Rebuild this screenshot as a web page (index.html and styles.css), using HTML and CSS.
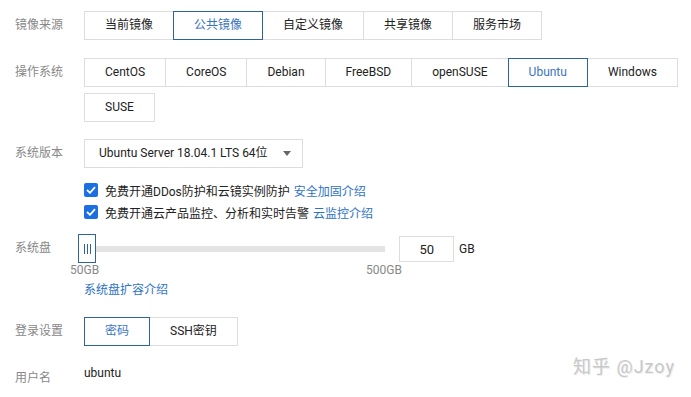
FILE: index.html
```html
<!DOCTYPE html>
<html lang="zh-CN">
<head>
  <meta charset="UTF-8">
  <title>镜像配置</title>
  <link rel="stylesheet" href="styles.css">
</head>
<body>

  <div class="form">

    <!-- 镜像来源 -->
    <div class="row row-first">
      <div class="label">镜像来源</div>
      <div class="options">
        <div class="opt">当前镜像</div>
        <div class="opt active">公共镜像</div>
        <div class="opt">自定义镜像</div>
        <div class="opt">共享镜像</div>
        <div class="opt">服务市场</div>
      </div>
    </div>

    <!-- 操作系统 -->
    <div class="row row-os">
      <div class="label">操作系统</div>
      <div class="options os">
        <div class="opt">CentOS</div>
        <div class="opt">CoreOS</div>
        <div class="opt">Debian</div>
        <div class="opt">FreeBSD</div>
        <div class="opt">openSUSE</div>
        <div class="opt active">Ubuntu</div>
        <div class="opt">Windows</div>
        <div class="opt">SUSE</div>
      </div>
    </div>

    <!-- 系统版本 -->
    <div class="row">
      <div class="label">系统版本</div>
      <div class="select">
        <span>Ubuntu Server 18.04.1 LTS 64位</span>
        <span class="caret"></span>
      </div>
    </div>

    <div class="checks">
      <label class="check">
        <span class="box"><svg width="10" height="8" viewBox="0 0 10 8"><path d="M1 4 L4 6.8 L9 1.2" fill="none" stroke="#fff" stroke-width="1.8"/></svg></span>
        免费开通DDos防护和云镜实例防护 <a class="link">安全加固介绍</a>
      </label>
      <label class="check">
        <span class="box"><svg width="10" height="8" viewBox="0 0 10 8"><path d="M1 4 L4 6.8 L9 1.2" fill="none" stroke="#fff" stroke-width="1.8"/></svg></span>
        免费开通云产品监控、分析和实时告警 <a class="link">云监控介绍</a>
      </label>
    </div>

    <!-- 系统盘 -->
    <div class="row row-disk">
      <div class="label">系统盘</div>
      <div class="slider">
        <div class="track"></div>
        <div class="handle">
          <svg width="7" height="10" viewBox="0 0 7 10"><path d="M0.5 0 V10 M3.5 0 V10 M6.5 0 V10" stroke="#2d649f" stroke-width="1"/></svg>
        </div>
      </div>
      <div class="num">50</div>
      <span class="unit">GB</span>
    </div>
    <div class="scale">
      <span>50GB</span>
      <span>500GB</span>
    </div>
    <a class="link disk-link">系统盘扩容介绍</a>

    <!-- 登录设置 -->
    <div class="row row-login">
      <div class="label">登录设置</div>
      <div class="options">
        <div class="opt active">密码</div>
        <div class="opt">SSH密钥</div>
      </div>
    </div>

    <div class="row row-user">
      <div class="label">用户名</div>
      <div class="value">ubuntu</div>
    </div>

  </div>

  <div class="watermark">知乎 @Jzoy</div>

</body>
</html>
```

FILE: styles.css
```css
body {
  margin: 0;
  background-color: #fff;
  font-family: Roboto, "Noto Sans CJK SC", sans-serif;
  font-size: 12px;
  color: #222;
  width: 691px;
  height: 397px;
  overflow: hidden;
  position: relative;
}

.form {
  padding-left: 15px;
}

.row {
  display: flex;
  align-items: flex-start;
  margin-top: 17px;
}

.row-first {
  margin-top: 11px;
}

.row-os {
  margin-top: 18px;
}

.label {
  width: 69px;
  flex: none;
  line-height: 29px;
  color: #888;
}

.options {
  display: flex;
  flex-wrap: wrap;
  row-gap: 6px;
  padding-left: 1px;
}

.options.os {
  width: 600px;
}

.opt {
  height: 27px;
  line-height: 27px;
  padding: 0 20px;
  border: 1px solid #ddd;
  margin-left: -1px;
  background: #fff;
  color: #222;
  position: relative;
}

.opt.active {
  border-color: #2d649f;
  color: #3a74c2;
  z-index: 1;
}

.select {
  width: 203px;
  height: 27px;
  line-height: 27px;
  border: 1px solid #ddd;
  padding-left: 14px;
  display: flex;
  align-items: center;
  justify-content: space-between;
}

.caret {
  width: 0;
  height: 0;
  border-left: 4px solid transparent;
  border-right: 4px solid transparent;
  border-top: 5px solid #666;
  margin-right: 11px;
}

.checks {
  margin-top: 11px;
  padding-left: 69px;
}

.check {
  display: flex;
  align-items: center;
  height: 22px;
}

.box {
  width: 14px;
  height: 14px;
  border-radius: 2px;
  background: #1b6fe0;
  display: flex;
  align-items: center;
  justify-content: center;
  margin-right: 7px;
}

.link {
  color: #2e72c6;
  margin-left: 4px;
}

.row-disk {
  margin-top: 11px;
  align-items: center;
}

.slider {
  width: 301px;
  height: 29px;
  position: relative;
  display: flex;
  align-items: center;
}

.track {
  width: 100%;
  height: 6px;
  background: #e3e3e3;
}

.handle {
  position: absolute;
  left: -6px;
  top: 0;
  width: 16px;
  height: 27px;
  border: 1px solid #2d649f;
  background: #fff;
  display: flex;
  align-items: center;
  justify-content: center;
}

.num {
  margin-left: 14px;
  width: 55px;
  height: 26px;
  line-height: 26px;
  border: 1px solid #ddd;
  text-align: right;
  box-sizing: border-box;
  padding-right: 19px;
  font-size: 13px;
}

.unit {
  margin-left: 5px;
}

.scale {
  display: flex;
  justify-content: space-between;
  width: 332px;
  margin-left: 55px;
  color: #888;
  line-height: 14px;
}

.disk-link {
  display: block;
  margin: 6px 0 0 69px;
  line-height: 14px;
}

.row-login {
  margin-top: 20px;
}

.row-user {
  margin-top: 16px;
}

.row-user .label {
  margin-top: 2px;
}

.value {
  line-height: 29px;
  margin-top: -3px;
}

.watermark {
  position: absolute;
  right: 16px;
  top: 352px;
  font-size: 18px;
  color: #c8c8c8;
  text-shadow: 1px 1px 0 #eee;
  letter-spacing: 1px;
}
```
